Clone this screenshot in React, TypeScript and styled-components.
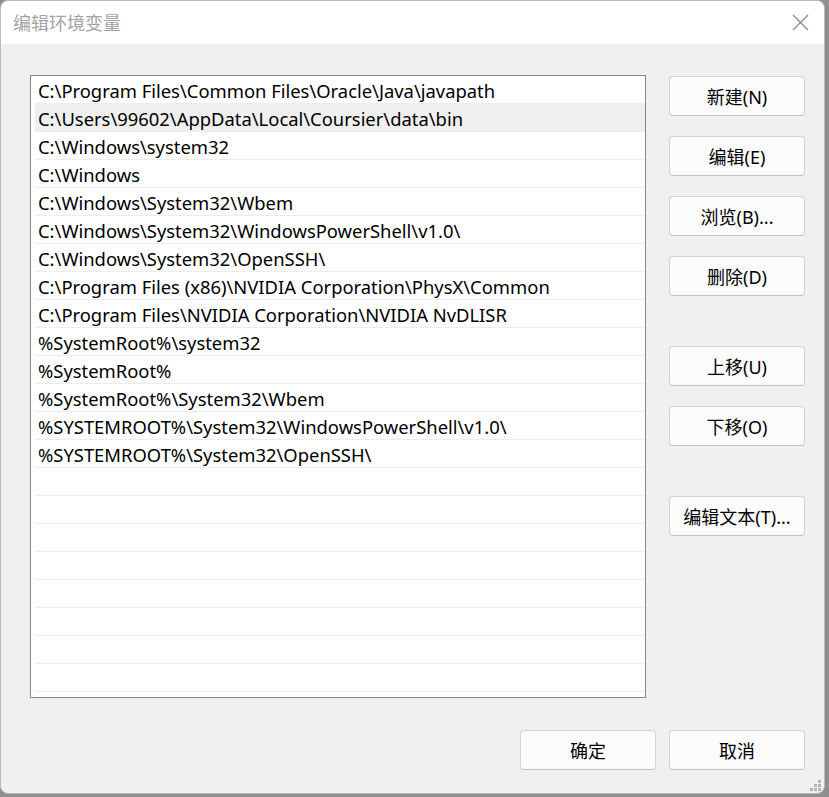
import React from "react";
import styled, { createGlobalStyle } from "styled-components";

const Global = createGlobalStyle`
  html, body { margin: 0; padding: 0; }
  body {
    background: #8f8f8f;
    width: 829px;
    height: 797px;
    overflow: hidden;
    font-family: "Noto Sans", "Noto Sans CJK SC", sans-serif;
  }
`;

const Window = styled.div`
  width: 825px;
  height: 794px;
  box-sizing: border-box;
  background: #f0f0f0;
  border: 1px solid #b9b9b9;
  border-radius: 8px;
  overflow: hidden;
  display: flex;
  flex-direction: column;
  position: relative;
`;

const TitleBar = styled.div`
  height: 43px;
  flex: none;
  background: #ffffff;
  display: flex;
  align-items: center;
  justify-content: space-between;
  padding: 0 15px 0 12px;
`;

const Title = styled.div`
  font-family: "Noto Sans CJK SC", sans-serif;
  font-size: 18px;
  color: #a3a3a3;
  margin-top: -2px;
`;

const Body = styled.div`
  flex: 1;
  display: grid;
  grid-template-columns: 616px 136px;
  column-gap: 23px;
  padding: 31px 0 0 29px;
  align-items: start;
`;

const List = styled.div`
  height: 623px;
  box-sizing: border-box;
  border: 1px solid #85858d;
  background: #ffffff;
  padding-left: 4px;
  overflow: hidden;
`;

const Row = styled.div<{ $selected?: boolean }>`
  height: 27px;
  border-bottom: 1px solid #ececec;
  background: ${(p) => (p.$selected ? "#efefef" : "transparent")};
  padding: 2px 0 0 3px;
  box-sizing: content-box;
  height: 25px;
  display: flex;
  align-items: center;
  font-size: 18.4px;
  color: #000;
  white-space: nowrap;
`;

const Side = styled.div`
  display: flex;
  flex-direction: column;
  padding-top: 1px;
`;

const Button = styled.button<{ $gap?: number }>`
  width: 136px;
  height: 40px;
  margin-top: ${(p) => p.$gap ?? 0}px;
  box-sizing: border-box;
  background: #fbfbfb;
  border: 1px solid #d3d3d3;
  border-bottom-color: #c2c2c2;
  border-radius: 4px;
  font-family: "Noto Sans", "Noto Sans CJK SC", sans-serif;
  font-size: 18px;
  color: #000;
  padding: 0;
  display: flex;
  align-items: center;
  justify-content: center;
`;

const Footer = styled.div`
  display: flex;
  justify-content: flex-end;
  gap: 13px;
  padding: 0 19px 23px 0;
`;

const Grip = styled.svg`
  position: absolute;
  right: 3px;
  bottom: 2px;
`;

const CloseIcon = () => (
  <svg width="17" height="17" viewBox="0 0 17 17">
    <path d="M1 1 L16 16 M16 1 L1 16" stroke="#8a8a8a" strokeWidth="1.3" fill="none" />
  </svg>
);

const paths = [
  "C:\\Program Files\\Common Files\\Oracle\\Java\\javapath",
  "C:\\Users\\99602\\AppData\\Local\\Coursier\\data\\bin",
  "C:\\Windows\\system32",
  "C:\\Windows",
  "C:\\Windows\\System32\\Wbem",
  "C:\\Windows\\System32\\WindowsPowerShell\\v1.0\\",
  "C:\\Windows\\System32\\OpenSSH\\",
  "C:\\Program Files (x86)\\NVIDIA Corporation\\PhysX\\Common",
  "C:\\Program Files\\NVIDIA Corporation\\NVIDIA NvDLISR",
  "%SystemRoot%\\system32",
  "%SystemRoot%",
  "%SystemRoot%\\System32\\Wbem",
  "%SYSTEMROOT%\\System32\\WindowsPowerShell\\v1.0\\",
  "%SYSTEMROOT%\\System32\\OpenSSH\\",
];

const rows = Array.from({ length: 22 }, (_, i) => paths[i] ?? "");

export default function App() {
  return (
    <>
      <Global />
      <Window>
        <TitleBar>
          <Title>编辑环境变量</Title>
          <CloseIcon />
        </TitleBar>
        <Body>
          <List>
            {rows.map((r, i) => (
              <Row key={i} $selected={i === 1}>
                {r}
              </Row>
            ))}
          </List>
          <Side>
            <Button>新建(N)</Button>
            <Button $gap={20}>编辑(E)</Button>
            <Button $gap={20}>浏览(B)...</Button>
            <Button $gap={20}>删除(D)</Button>
            <Button $gap={50}>上移(U)</Button>
            <Button $gap={20}>下移(O)</Button>
            <Button $gap={50}>编辑文本(T)...</Button>
          </Side>
        </Body>
        <Footer>
          <Button>确定</Button>
          <Button>取消</Button>
        </Footer>
        <Grip width="11" height="11" viewBox="0 0 11 11">
          {[
            [8, 0],
            [4, 4],
            [8, 4],
            [0, 8],
            [4, 8],
            [8, 8],
          ].map(([x, y], i) => (
            <rect key={i} x={x} y={y} width="3" height="3" fill="#b5b5b5" />
          ))}
        </Grip>
      </Window>
    </>
  );
}
